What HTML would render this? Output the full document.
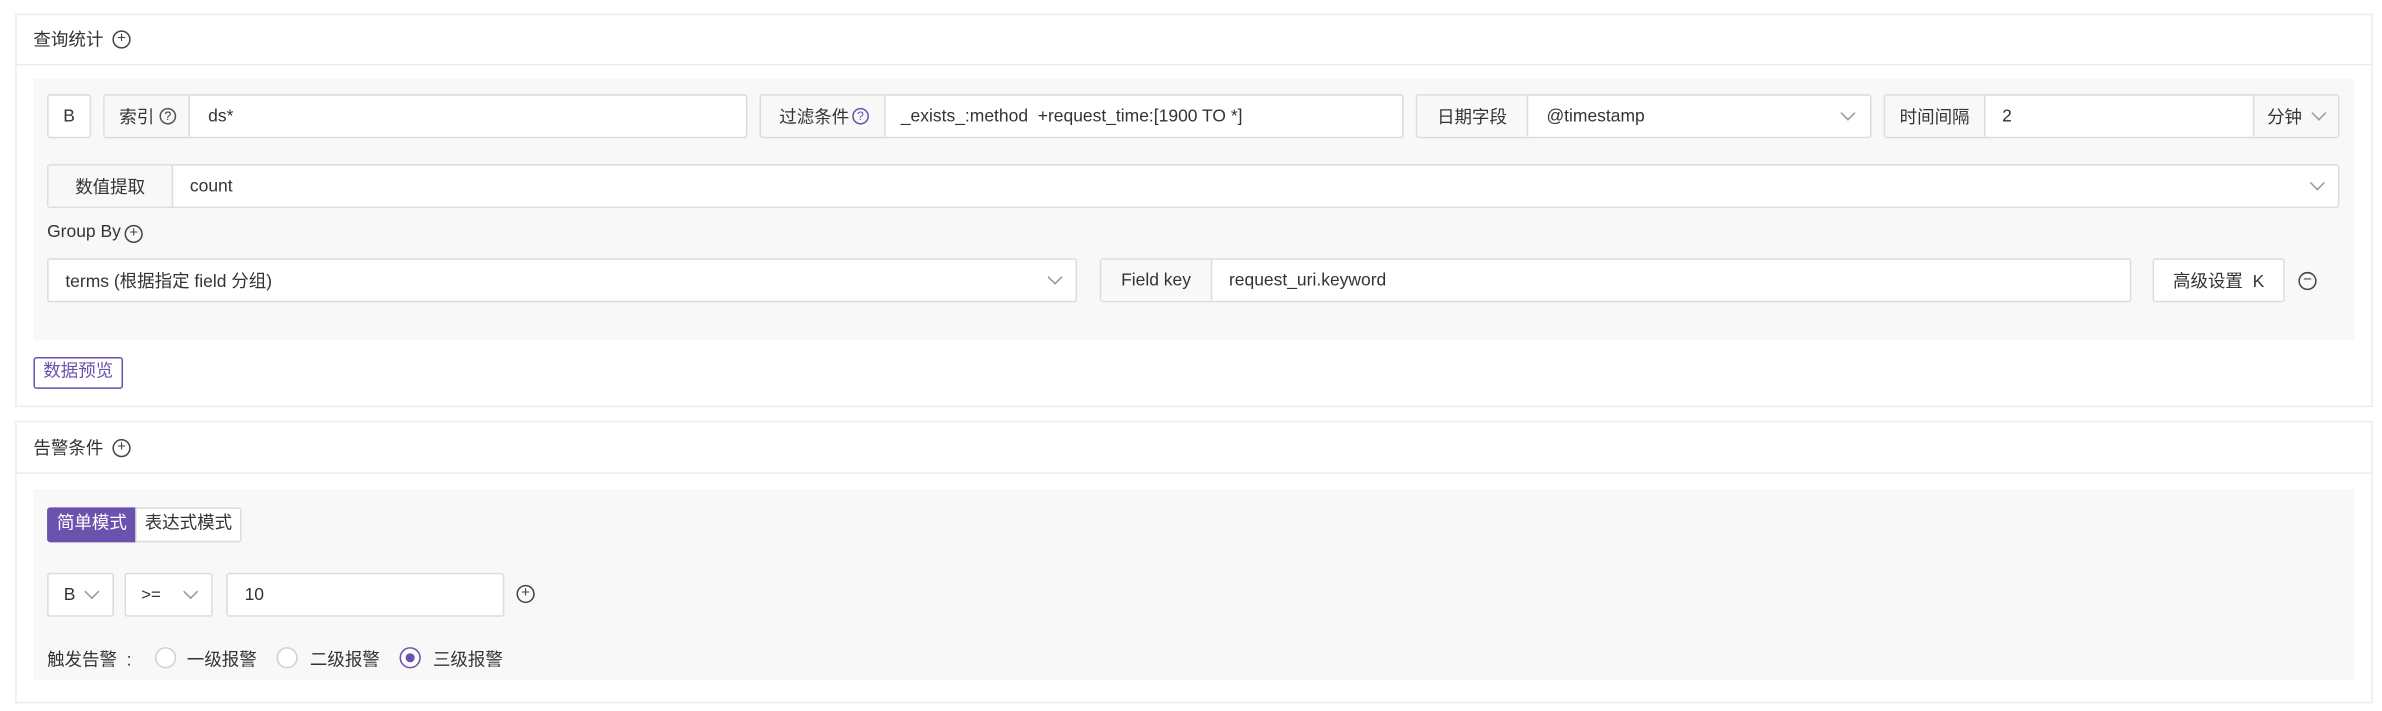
<!DOCTYPE html>
<html><head><meta charset="utf-8"><style>
*{box-sizing:border-box;margin:0;padding:0}
html,body{width:2382px;height:710px;overflow:hidden;background:#fff}
#w{position:absolute;left:0;top:0;width:1568px;height:468px;transform:scale(1.5191);transform-origin:0 0;font-family:"Liberation Sans","Noto Sans CJK SC",sans-serif;font-size:11.5px;color:#333}
.a{position:absolute}
.card{position:absolute;border:1px solid #ececec;background:#fff}
.hl{position:absolute;left:0;right:0;height:1px;background:#ececec}
.gray{position:absolute;background:#f8f8f8}
.box{position:absolute;border:1px solid #dcdcdc;background:#fff;border-radius:2px;display:flex;align-items:center;white-space:nowrap}
.lab{position:absolute;top:0;bottom:0;background:#f8f8f8;display:flex;align-items:center;justify-content:center;border-right:1px solid #dcdcdc}
.chev{position:absolute;width:7px;height:7px;border-right:1px solid #999;border-bottom:1px solid #999;transform:rotate(45deg)}
.circ{position:absolute;width:12px;height:12px;border:1px solid #444;border-radius:50%;font-size:10px;line-height:10px;text-align:center;color:#444}
.q{position:absolute;width:11px;height:11px;border:1px solid #555;border-radius:50%;font-size:8px;line-height:9px;text-align:center}
.radio{position:absolute;width:14px;height:14px;border:1px solid #d0d0d0;border-radius:50%;background:#fff}
</style></head><body><div id="w">
<div class="card" style="left:10px;top:9px;width:1552px;height:259px">
  <div class="a" style="left:11px;top:8px">查询统计</div>
  <div class="circ" style="left:63px;top:10px">+</div>
  <div class="hl" style="top:32px"></div>
</div>
<div class="gray" style="left:22px;top:52px;width:1528px;height:172px"></div>
<div class="box" style="left:31px;top:62px;width:29px;height:29px;justify-content:center">B</div>
<div class="box" style="left:68px;top:62px;width:424px;height:29px"><div class="lab" style="left:0;width:56px">索引<span style="display:inline-block;width:13px"></span></div><div class="q" style="left:36px;top:8px">?</div><span style="margin-left:68px">ds*</span></div>
<div class="box" style="left:500px;top:62px;width:424px;height:29px"><div class="lab" style="left:0;width:82px;justify-content:flex-start;padding-left:12px">过滤条件</div><div class="q" style="left:60px;top:8px;border-color:#6b52ae;color:#6b52ae">?</div><span style="margin-left:92px">_exists_:method&nbsp; +request_time:[1900 TO *]</span></div>
<div class="box" style="left:932px;top:62px;width:300px;height:29px"><div class="lab" style="left:0;width:73px">日期字段</div><span style="margin-left:85px">@timestamp</span><div class="chev" style="left:280px;top:8px"></div></div>
<div class="box" style="left:1240px;top:62px;width:300px;height:29px"><div class="lab" style="left:0;width:66px">时间间隔</div><span style="margin-left:77px">2</span><div class="lab" style="left:242px;right:0;border-right:0;border-left:1px solid #dcdcdc">分钟&nbsp;<span style="display:inline-block;width:12px"></span></div><div class="chev" style="left:282px;top:8px"></div></div>
<div class="box" style="left:31px;top:108px;width:1509px;height:29px"><div class="lab" style="left:0;width:82px">数值提取</div><span style="margin-left:93px">count</span><div class="chev" style="left:1490px;top:8px"></div></div>
<div class="a" style="left:31px;top:147px">Group By</div>
<div class="circ" style="left:82px;top:148px">+</div>
<div class="box" style="left:31px;top:170px;width:678px;height:29px"><span style="margin-left:11px">terms (根据指定 field 分组)</span><div class="chev" style="left:659px;top:8px"></div></div>
<div class="box" style="left:724px;top:170px;width:679px;height:29px"><div class="lab" style="left:0;width:73px">Field key</div><span style="margin-left:84px">request_uri.keyword</span></div>
<div class="box" style="left:1417px;top:170px;width:87px;height:29px;justify-content:center">高级设置&nbsp;&nbsp;K</div>
<div class="circ" style="left:1513px;top:179px">−</div>
<div class="a" style="left:22px;top:235px;width:59px;height:21px;border:1px solid #6b52ae;border-radius:2px;color:#6b52ae;text-align:center;line-height:19px">数据预览</div>

<div class="card" style="left:10px;top:277px;width:1552px;height:186px">
  <div class="a" style="left:11px;top:9px">告警条件</div>
  <div class="circ" style="left:63px;top:11px">+</div>
  <div class="hl" style="top:33px"></div>
</div>
<div class="gray" style="left:22px;top:322px;width:1528px;height:126px"></div>
<div class="a" style="left:31px;top:334px;width:59px;height:23px;background:#6b52ae;color:#fff;text-align:center;line-height:22px;border-radius:2px 0 0 2px">简单模式</div>
<div class="a" style="left:89px;top:334px;width:70px;height:23px;background:#fff;border:1px solid #dcdcdc;text-align:center;line-height:21px;border-radius:0 2px 2px 0">表达式模式</div>
<div class="box" style="left:31px;top:377px;width:44px;height:29px"><span style="margin-left:10px">B</span><div class="chev" style="left:25px;top:8px"></div></div>
<div class="box" style="left:82px;top:377px;width:58px;height:29px"><span style="margin-left:10px;font-size:11px">&gt;=</span><div class="chev" style="left:39px;top:8px"></div></div>
<div class="box" style="left:149px;top:377px;width:183px;height:29px"><span style="margin-left:11px">10</span></div>
<div class="circ" style="left:340px;top:385px">+</div>
<div class="a" style="left:31px;top:426px">触发告警&nbsp;&nbsp;:</div>
<div class="radio" style="left:102px;top:426px"></div>
<div class="a" style="left:123px;top:426px">一级报警</div>
<div class="radio" style="left:182px;top:426px"></div>
<div class="a" style="left:204px;top:426px">二级报警</div>
<div class="radio" style="left:263px;top:426px;border-color:#6b52ae"><div class="a" style="left:3px;top:3px;width:6px;height:6px;border-radius:50%;background:#6b52ae"></div></div>
<div class="a" style="left:285px;top:426px">三级报警</div>
</div></body></html>
